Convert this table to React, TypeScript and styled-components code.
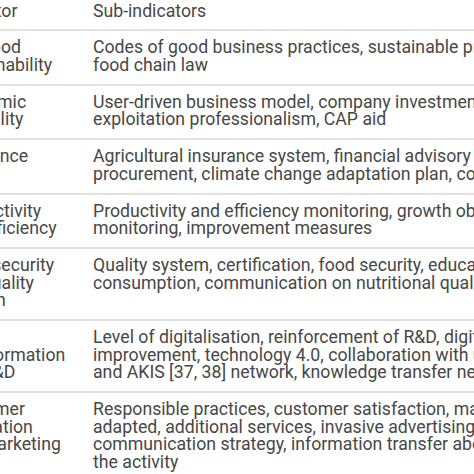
import styled, { createGlobalStyle } from 'styled-components';

const GlobalStyle = createGlobalStyle`
  html, body {
    margin: 0;
    padding: 0;
    background: #ffffff;
    overflow: hidden;
  }
`;

const Table = styled.div`
  margin-left: -52px;
  width: 1100px;
  font-family: Roboto, "Liberation Sans", sans-serif;
  font-size: 17.7px;
  line-height: 17.5px;
  color: #474747;
`;

const Row = styled.div<{ $head?: boolean }>`
  display: grid;
  grid-template-columns: 145px 1fr;
  border-top: ${(p) => (p.$head ? 'none' : '2px solid #e1e1e1')};
  padding: ${(p) => (p.$head ? '3px 0 8.5px' : '8px 0 9.5px')};
`;

const Cell = styled.div`
  white-space: nowrap;
`;

const Line = styled.span`
  display: block;
`;

type Entry = { indicator: string[]; subs: string[] };

const rows: Entry[] = [
  {
    indicator: ['Agri-food', 'sustainability'],
    subs: ['Codes of good business practices, sustainable production,', 'food chain law'],
  },
  {
    indicator: ['Economic', 'feasibility'],
    subs: ['User-driven business model, company investment,', 'exploitation professionalism, CAP aid'],
  },
  {
    indicator: ['Resilience'],
    subs: [
      'Agricultural insurance system, financial advisory services,',
      'procurement, climate change adaptation plan, cost control',
    ],
  },
  {
    indicator: ['Productivity', 'and efficiency'],
    subs: ['Productivity and efficiency monitoring, growth objectives,', 'monitoring, improvement measures'],
  },
  {
    indicator: ['Food security', 'and quality', 'section'],
    subs: [
      'Quality system, certification, food security, education on',
      'consumption, communication on nutritional quality',
    ],
  },
  {
    indicator: ['Digital', 'transformation', 'and R&D'],
    subs: [
      'Level of digitalisation, reinforcement of R&D, digital',
      'improvement, technology 4.0, collaboration with universities',
      'and AKIS [37, 38] network, knowledge transfer network',
    ],
  },
  {
    indicator: ['Customer', 'orientation', 'and marketing'],
    subs: [
      'Responsible practices, customer satisfaction, market',
      'adapted, additional services, invasive advertising,',
      'communication strategy, information transfer about',
      'the activity',
    ],
  },
];

const Lines = ({ items }: { items: string[] }) => (
  <Cell>
    {items.map((t, i) => (
      <Line key={i}>{t}</Line>
    ))}
  </Cell>
);

export default function App() {
  return (
    <>
      <GlobalStyle />
      <Table>
        <Row $head>
          <Lines items={['Indicator']} />
          <Lines items={['Sub-indicators']} />
        </Row>
        {rows.map((r, i) => (
          <Row key={i}>
            <Lines items={r.indicator} />
            <Lines items={r.subs} />
          </Row>
        ))}
      </Table>
    </>
  );
}
